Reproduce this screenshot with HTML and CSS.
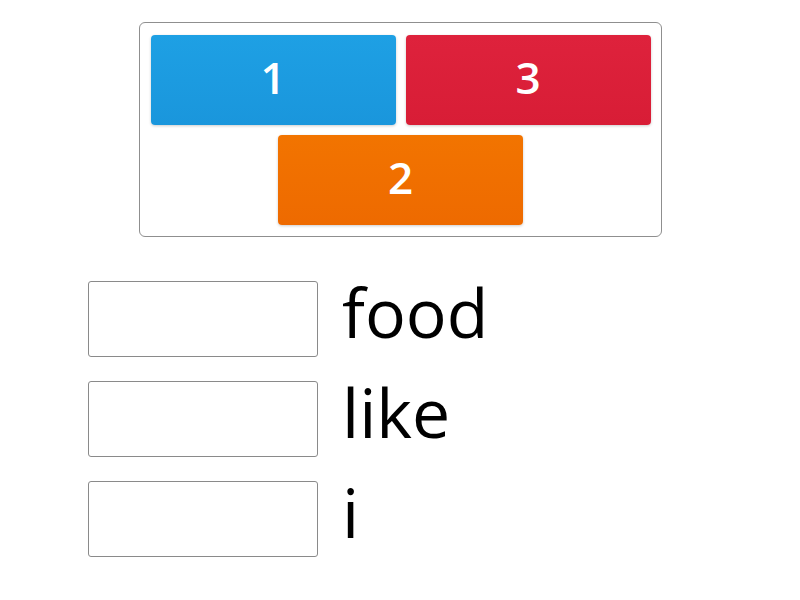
FILE: index.html
```html
<!DOCTYPE html>
<html lang="en">
<head>
  <meta charset="UTF-8" />
  <title>Order the words</title>
  <link rel="stylesheet" href="styles.css">
</head>
<body>
  <div class="tiles">
    <div class="tile blue">1</div>
    <div class="tile red">3</div>
    <div class="tile orange">2</div>
  </div>

  <div class="answers">
    <div class="row">
      <div class="slot"></div>
      <span class="word">food</span>
    </div>
    <div class="row">
      <div class="slot"></div>
      <span class="word">like</span>
    </div>
    <div class="row">
      <div class="slot"></div>
      <span class="word">i</span>
    </div>
  </div>
</body>
</html>
```

FILE: styles.css
```css
body {
  font-family: "Open Sans", Arial, sans-serif;
  background: #fff;
  color: #000;
  margin: 0;
  padding: 22px 0 0;
}
.tiles {
  width: 523px;
  margin: 0 auto;
  border: 1px solid #8f8f8f;
  border-radius: 6px;
  padding: 12px 10px 11px 11px;
  display: flex;
  flex-wrap: wrap;
  justify-content: center;
  gap: 10px;
  box-sizing: border-box;
}
.tile {
  width: 245px;
  height: 90px;
  border-radius: 4px;
  color: #fff;
  font-size: 44px;
  font-weight: 600;
  display: flex;
  align-items: center;
  justify-content: center;
  padding-bottom: 6px;
  box-sizing: border-box;
  box-shadow: 0 1px 3px rgba(0,0,0,0.2);
}
.blue {
  background: linear-gradient(#1ea0e4, #1a96dc);
}
.red {
  background: linear-gradient(#de223c, #d81d36);
}
.orange {
  background: linear-gradient(#f27400, #ee6a00);
}
.answers {
  margin: 44px 0 0 88px;
  display: flex;
  flex-direction: column;
  gap: 24px;
}
.row {
  display: flex;
  align-items: center;
  height: 76px;
}
.slot {
  width: 230px;
  height: 76px;
  border: 1px solid #8a8a8a;
  border-radius: 3px;
  box-sizing: border-box;
}
.word {
  margin-left: 24px;
  font-size: 68px;
  line-height: 76px;
  margin-top: -14px;
}
```
